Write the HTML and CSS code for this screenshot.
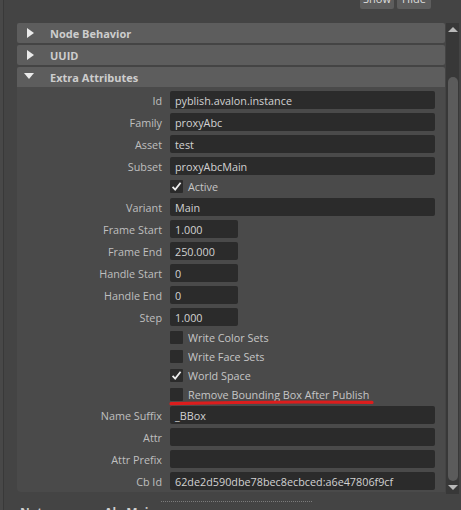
FILE: index.html
```html
<!DOCTYPE html>
<html>
<head>
<meta charset="utf-8">
<title>Attribute Editor</title>
<link rel="stylesheet" href="styles.css">
</head>
<body>
<div class="frame">
  <div class="toolbar">
    <button class="tbtn">Show</button>
    <button class="tbtn">Hide</button>
  </div>
  <div class="main">
    <div class="sections">
      <div class="hdr"><span class="tri tri-r"></span>Node Behavior</div>
      <div class="hdr"><span class="tri tri-r"></span>UUID</div>
      <div class="hdr open"><span class="tri tri-d"></span>Extra Attributes</div>
      <div class="panel">
        <div class="lbl">Id</div><div class="field">pyblish.avalon.instance</div>
        <div class="lbl">Family</div><div class="field">proxyAbc</div>
        <div class="lbl">Asset</div><div class="field">test</div>
        <div class="lbl">Subset</div><div class="field">proxyAbcMain</div>
        <div class="check"><span class="box"><svg viewBox="0 0 13 13" width="13" height="13"><path d="M2.6 6.8 L5.2 9.6 L10.6 2.8" fill="none" stroke="#ececec" stroke-width="1.8"/></svg></span>Active</div>
        <div class="lbl">Variant</div><div class="field">Main</div>
        <div class="lbl">Frame Start</div><div class="field short">1.000</div>
        <div class="lbl">Frame End</div><div class="field short">250.000</div>
        <div class="lbl">Handle Start</div><div class="field short">0</div>
        <div class="lbl">Handle End</div><div class="field short">0</div>
        <div class="lbl">Step</div><div class="field short">1.000</div>
        <div class="check"><span class="box"></span>Write Color Sets</div>
        <div class="check"><span class="box"></span>Write Face Sets</div>
        <div class="check"><span class="box"><svg viewBox="0 0 13 13" width="13" height="13"><path d="M2.6 6.8 L5.2 9.6 L10.6 2.8" fill="none" stroke="#ececec" stroke-width="1.8"/></svg></span>World Space</div>
        <div class="check"><span class="box"></span>Remove Bounding Box After Publish</div>
        <div class="lbl">Name Suffix</div><div class="field">_BBox</div>
        <div class="lbl">Attr</div><div class="field"></div>
        <div class="lbl">Attr Prefix</div><div class="field"></div>
        <div class="lbl">Cb Id</div><div class="field">62de2d590dbe78bec8ecbced:a6e47806f9cf</div>
      </div>
    </div>
    <div class="scroll">
      <span class="arr-up"></span>
      <span class="thumb"></span>
      <span class="arr-down"></span>
    </div>
  </div>
  <div class="sep"></div>
  <div class="notes"><span class="notes-lbl">Notes :</span><span class="notes-name">proxyAbcMain</span></div>
</div>
<svg class="annot" width="461" height="510" viewBox="0 0 461 510">
  <path d="M171 403.6 Q 270 401.2 372 402.4" fill="none" stroke="#dc1d1d" stroke-width="3.2" stroke-linecap="round"/>
</svg>
</body>
</html>
```

FILE: styles.css
```css
* { box-sizing: border-box; }
html, body { margin: 0; padding: 0; }
body {
  width: 461px;
  height: 510px;
  overflow: hidden;
  position: relative;
  background: #484848;
  font-family: "Open Sans", "DejaVu Sans", sans-serif;
  font-size: 10.8px;
  color: #c2c2c2;
}
.frame {
  margin-left: 3px;
  border-left: 1px solid #393939;
  background: #444444;
  height: 510px;
}
.toolbar {
  height: 9px;
  overflow: hidden;
  display: flex;
  justify-content: flex-end;
  align-items: flex-end;
  gap: 3px;
  padding-right: 30px;
}
.tbtn {
  flex: none;
  width: 34px;
  height: 20px;
  border: 0;
  padding: 0;
  background: #5d5d5d;
  color: #dedede;
  font-family: "Open Sans", sans-serif;
  font-size: 11px;
  line-height: 20px;
  border-radius: 2px;
}
.main {
  display: flex;
  align-items: flex-start;
  margin-top: 14px;
}
.sections {
  margin-left: 13px;
  width: 428px;
}
.hdr {
  height: 20px;
  margin-bottom: 2px;
  background: #5d5d5d;
  border-radius: 2px;
  display: flex;
  align-items: center;
  font-weight: bold;
  font-size: 11px;
  color: #cdcdcd;
}
.hdr.open {
  margin-bottom: 0;
  border-radius: 2px 2px 0 0;
}
.tri {
  flex: none;
  width: 33px;
  display: flex;
  align-items: center;
}
.tri-r::before {
  content: "";
  margin-left: 10px;
  margin-top: -1px;
  border-left: 7px solid #ebebeb;
  border-top: 5px solid transparent;
  border-bottom: 5px solid transparent;
}
.tri-d::before {
  content: "";
  margin-left: 7px;
  margin-top: -3px;
  border-top: 6px solid #ebebeb;
  border-left: 5.5px solid transparent;
  border-right: 5.5px solid transparent;
}
.panel {
  background: #4a4a4a;
  padding: 4px 10px 2px 0;
  border-radius: 0 0 0 4px;
  display: grid;
  grid-template-columns: 145px 1fr;
  column-gap: 8px;
  row-gap: 4px;
}
.lbl {
  height: 18px;
  display: flex;
  align-items: center;
  justify-content: flex-end;
  white-space: nowrap;
  color: #bfbfbf;
}
.field {
  height: 18px;
  background: #2b2b2b;
  border-radius: 2px;
  padding-left: 5px;
  display: flex;
  align-items: center;
  white-space: nowrap;
  color: #d2d2d2;
}
.field.short { width: 68px; }
.check {
  grid-column: 2;
  height: 15px;
  display: flex;
  align-items: center;
  gap: 5px;
  white-space: nowrap;
  color: #c6c6c6;
}
.box {
  flex: none;
  width: 13px;
  height: 13px;
  background: #2b2b2b;
  border-radius: 1px;
  display: block;
}
.box svg { display: block; }
.scroll {
  flex: none;
  margin-left: 1px;
  width: 13px;
  height: 471px;
  background: #383838;
  display: flex;
  flex-direction: column;
  align-items: center;
}
.arr-up {
  margin-top: 4px;
  width: 0;
  height: 0;
  border-left: 5px solid transparent;
  border-right: 5px solid transparent;
  border-bottom: 5px solid #b9b9b9;
}
.thumb {
  margin-top: 45px;
  width: 10px;
  height: 404px;
  background: #5b5b5b;
  border-radius: 5px;
}
.arr-down {
  margin-top: 4px;
  width: 0;
  height: 0;
  border-left: 5px solid transparent;
  border-right: 5px solid transparent;
  border-top: 5px solid #b9b9b9;
}
.sep {
  margin: 7px 0 0 157px;
  width: 151px;
  height: 0;
  border-top: 1px dotted #7c7c7c;
}
.notes {
  margin-top: 3px;
  padding-left: 16px;
  font-weight: bold;
  font-size: 12px;
  line-height: 16px;
  color: #d0d0d0;
  white-space: nowrap;
}
.notes-name { margin-left: 8px; }
.annot {
  position: absolute;
  left: 0;
  top: 0;
  pointer-events: none;
}
```
